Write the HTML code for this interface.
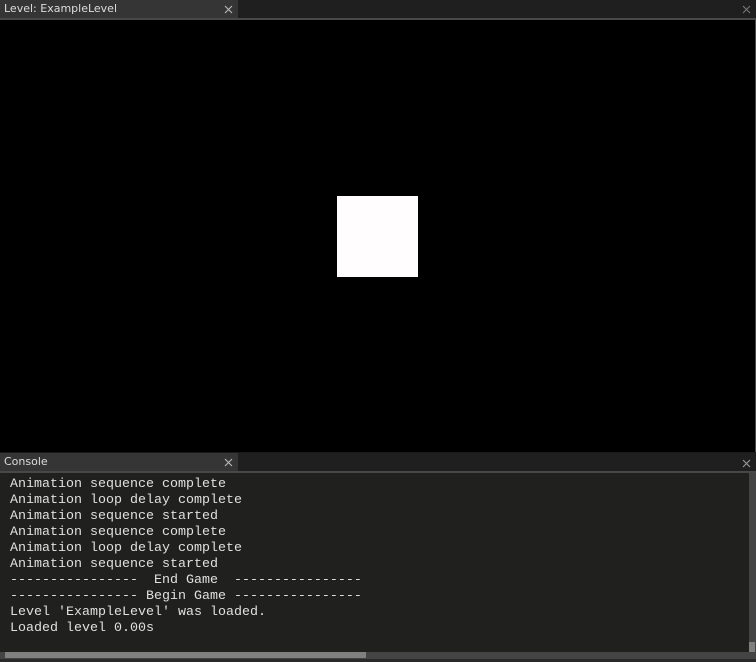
<html><head><style>
body{margin:0;width:756px;height:662px;background:#1f1f1f;position:relative;overflow:hidden;font-family:"DejaVu Sans","Liberation Sans",sans-serif}
div{position:absolute;box-sizing:border-box}
.tab{background:#353535;color:#ddd;font-size:11px;line-height:18px;padding-left:4px}
svg{position:absolute}
pre{margin:0;position:absolute;left:10px;top:477px;font-family:"Liberation Mono",monospace;font-size:13.33px;line-height:16px;color:#e0e0e0}
</style></head><body>
<div style="left:0;top:0;width:756px;height:18px;background:#1f1f1f"></div>
<div class="tab" style="left:0;top:0;width:238px;height:18px">Level: ExampleLevel</div>
<svg style="left:224px;top:5px" width="9" height="9"><path d="M1 1L8 8M8 1L1 8" stroke="#bbb" stroke-width="1.1"/></svg>
<svg style="left:742px;top:5px" width="9" height="9"><path d="M1 1L8 8M8 1L1 8" stroke="#777" stroke-width="1.1"/></svg>
<div style="left:0;top:18px;width:756px;height:2px;background:#484848"></div>
<div style="left:0;top:20px;width:755px;height:432px;background:#000"></div>
<div style="left:755px;top:20px;width:1px;height:432px;background:#484848"></div>
<div style="left:337px;top:196px;width:81px;height:81px;background:#fffdfd"></div>
<div style="left:0;top:452px;width:756px;height:1px;background:#1a1a1a"></div>
<div class="tab" style="left:0;top:453px;width:238px;height:18px">Console</div>
<svg style="left:224px;top:458px" width="9" height="9"><path d="M1 1L8 8M8 1L1 8" stroke="#bbb" stroke-width="1.1"/></svg>
<svg style="left:742px;top:459px" width="9" height="9"><path d="M1 1L8 8M8 1L1 8" stroke="#999" stroke-width="1.1"/></svg>
<div style="left:0;top:471px;width:756px;height:2px;background:#484848"></div>
<div style="left:0;top:473px;width:756px;height:179px;background:#20201e"></div>
<pre>Animation sequence complete
Animation loop delay complete
Animation sequence started
Animation sequence complete
Animation loop delay complete
Animation sequence started
----------------  End Game  ----------------
---------------- Begin Game ----------------
Level 'ExampleLevel' was loaded.
Loaded level 0.00s</pre>
<div style="left:749px;top:473px;width:7px;height:179px;background:#444"></div>
<div style="left:749px;top:642px;width:6px;height:10px;background:#808080"></div>
<div style="left:0;top:652px;width:756px;height:7px;background:#444"></div>
<div style="left:5px;top:652px;width:361px;height:6px;background:#808080"></div>
<div style="left:0;top:659px;width:756px;height:3px;background:#2a2a2a"></div>
</body></html>
